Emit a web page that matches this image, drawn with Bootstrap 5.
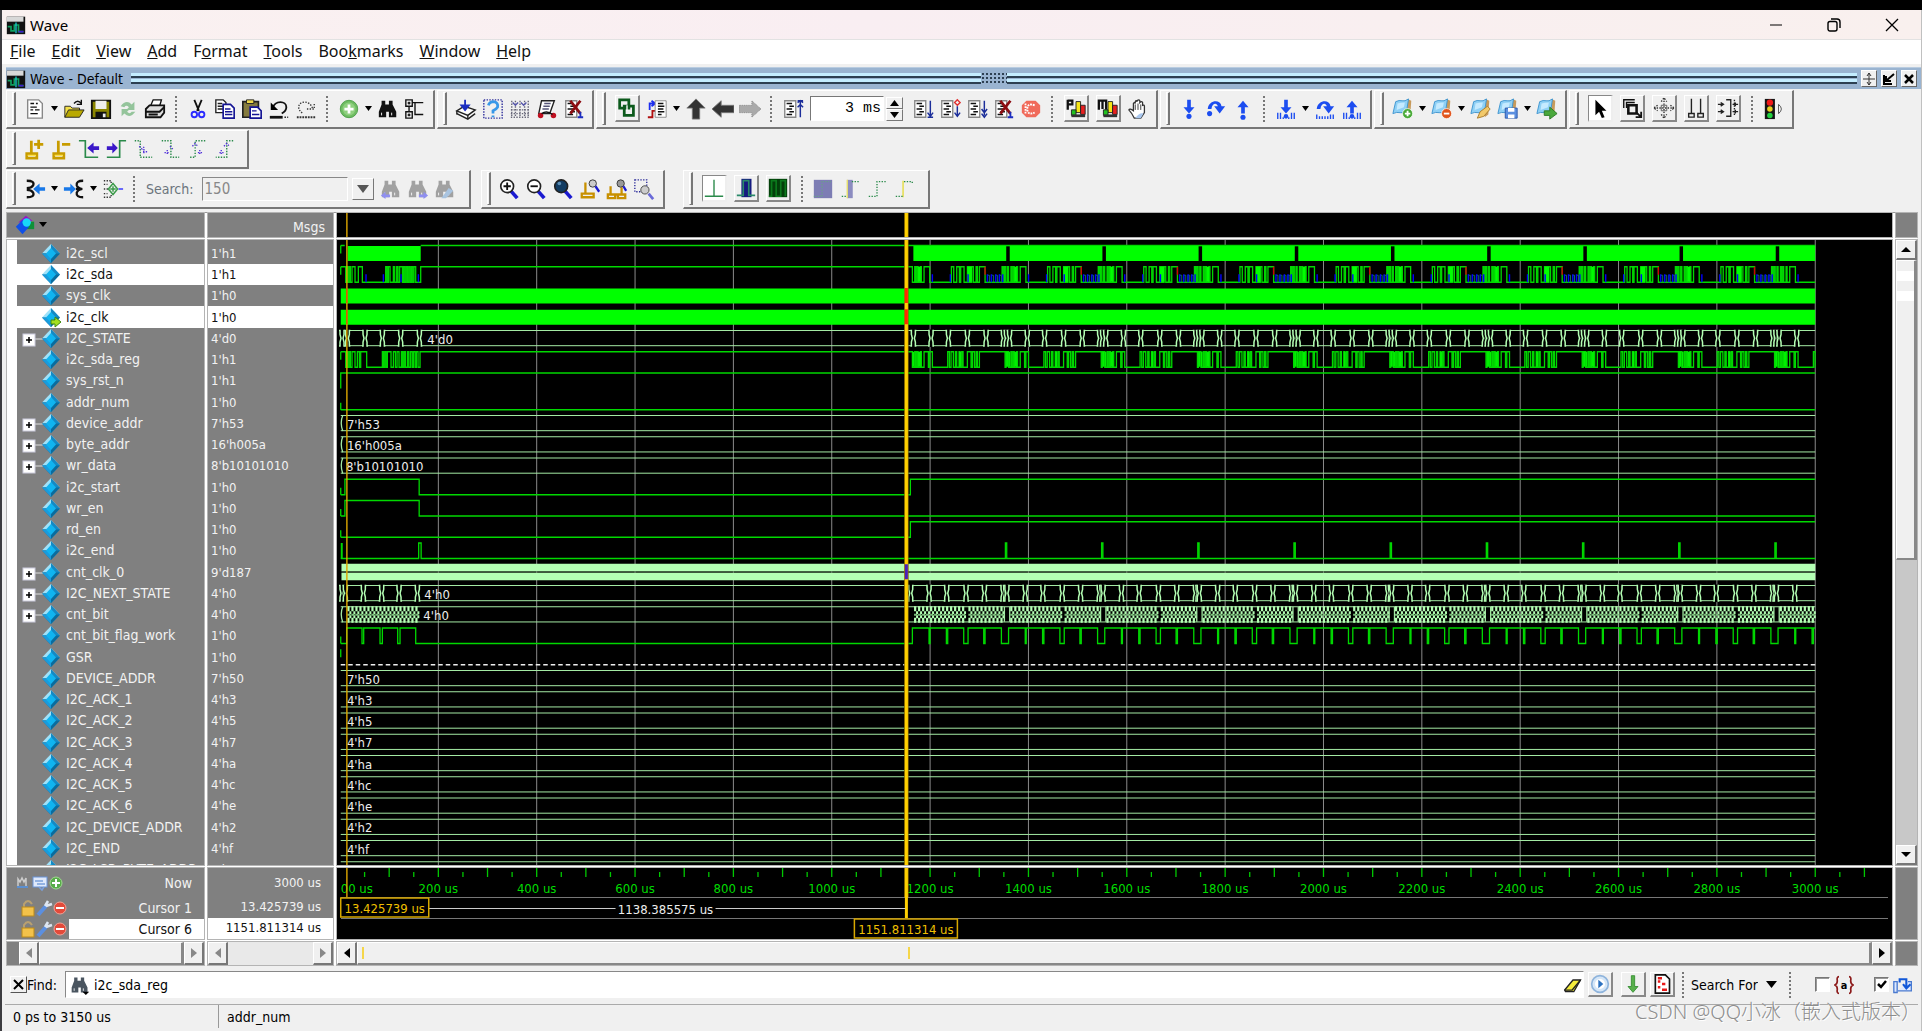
<!DOCTYPE html>
<html lang="en">
<head>
<meta charset="utf-8">
<meta name="viewport" content="width=device-width, initial-scale=1">
<title>Wave</title>
<link href="https://cdn.jsdelivr.net/npm/bootstrap@5.3.0/dist/css/bootstrap.min.css" rel="stylesheet">
<style>
:root{--ui:"DejaVu Sans Condensed","Noto Sans",sans-serif;--menu:"Noto Sans","Open Sans",sans-serif;--face:#f0f0f0;--slot:#808080}
body{font:14px/20px var(--ui);color:#000;background:#000}
.app-window{background:var(--face);border-left:2px solid #3c3c40;border-right:1px solid #c0c0c0;margin-top:10px;min-height:0}
.title-bar{height:30px;background:linear-gradient(90deg,#faf1f0,#f9eef2 45%,#f9f0ee);font:15px/20px var(--menu);border-bottom:1px solid #e2e2e2}
.title-bar button{width:58px;height:26px}
.plain{border:0;background:none;padding:0;display:inline-flex;align-items:center;justify-content:center}
.menu-bar{height:24px;font:16px/20px var(--menu);gap:16px;padding-bottom:2px}
.menu-bar a{color:#111;text-decoration:none}
.pane-bar{height:22px;background:#9ab4d1;border-top:1px solid #b9cce0;margin:3px 0 1px 4px}
.pane-lines{height:11px;background:linear-gradient(#c4edff 0 3px,#2d4052 3px 5px,#9ab4d1 5px 6px,#c4edff 6px 9px,#2d4052 9px 11px)}
.pane-dots{width:26px;height:13px;background:radial-gradient(circle,#2d4052 1px,transparent 1px) 0 0/4px 4px #9ab4d1}
.pane-bar .plain{width:16px;height:17px;background:var(--face);border:1px solid;border-color:#fff #666 #666 #fff}
.tools-row{height:40px;gap:2px}
.tool-strip{height:39px;border:1px solid;border-color:#fff #777 #777 #fff;border-right-width:2px;border-bottom-width:2px;padding:0 5px 1px 5px}
.tool-strip::before{content:"";width:4px;height:33px;margin-right:5px;border:1px solid;border-color:#fff #777 #777 #fff;border-right-width:2px}
.tool-strip.wide{padding-right:10px}
.tb{width:27px;height:27px;flex:none}
.tb svg{width:22px;height:24px}
.tb.boxed{width:25px;margin:0 3px 0 4px;border:1px solid;border-color:#fff #888 #888 #fff;border-right-width:2px;border-bottom-width:2px}
.tb.pressed{background:#fff;border-color:#888 #eee #eee #888}
.tv{width:12px;height:27px}
.tsep{width:0;height:26px;margin:0 7px;border-left:2px dotted #777}
.run-len{width:74px;height:25px;border:1px solid;border-color:#777 #fff #fff #777;border-radius:0;background:#fff;font:15px "Liberation Mono",monospace;text-align:right;padding:0 2px}
.spin{width:17px;margin:0 6px 0 2px}
.spin .plain{height:12px;background:var(--face);border:1px solid;border-color:#fff #777 #777 #fff}
.hist{width:146px;height:24px;border:1px solid;border-color:#888 #fff #fff #888;background:var(--face);color:#888;font:15px var(--ui);padding:0 2px;appearance:none;opacity:1}
.drop{width:22px;height:22px;border:1px solid;border-color:#fff #777 #777 #fff;background:var(--face)}
.panes{display:grid;grid-template-columns:197px 125px minmax(0,1fr) 21px;grid-template-rows:24px minmax(0,1fr) 71px 23px;column-gap:4px;row-gap:3px;background:#fff;margin:2px 4px 0 5px;border-top:1px solid #999;min-height:0}
.panes>*{min-width:0;min-height:0;overflow:hidden;box-shadow:0 0 0 1px #b4b4b4}
.slot{background:var(--slot);color:#f2f2f2}
.black{background:#000}
.sig-list{padding:3px 0 0;margin:0;list-style:none}
.names{border-left:10px solid #fff}
.sig{height:21px;line-height:19px;display:flex;align-items:center;white-space:nowrap}
.sig:nth-child(4n){height:22px}
.sig.sel{background:#fff;color:#111}
.names .sig svg{width:44px;height:21px;margin-right:5px;flex:none}
.values .sig{padding-left:3px}
.values,.readout{font-size:13px}
.cur-row{height:21px;padding-right:12px}
.now-row{height:29px}
.cur-row.sel{color:#111}
.cur-row.sel>span:last-child,.cur-row.sel.full{background:#fff;color:#111}
.cur-row svg{width:50px;height:20px}
.sb{background:var(--face);border:1px solid;border-color:#fff #777 #777 #fff;border-right-width:2px;border-bottom-width:2px;flex:none;width:20px}
.sb.vert{width:100%;height:20px}
.trough{background:#e9e9e9}
.vt{background:#c8c8c8}
.thumb{background:var(--face);border:1px solid;border-color:#fff #888 #888 #fff;border-right-width:3px;border-bottom-width:2px}
.thumb-v{height:300px;background:linear-gradient(var(--face) 0 10px,#fff 10px 20px,var(--face) 20px 30px,#fff 30px 40px,var(--face) 40px)}
.mark-y{border-left:2px solid #f5d64a}
.mark-gap{width:36%}
.find-bar{height:39px}
.find-bar .xbtn{width:17px;height:17px;border:1px solid;border-color:#fff #555 #555 #fff;background:var(--face)}
.find-field{height:27px;background:#fff;border:1px solid;border-color:#888 #fff #fff #888}
.find-field input{border:0;outline:0;font:14px var(--ui);background:none;padding:0}
.find-bar .sq{width:25px;height:25px;border:1px solid;border-color:#fff #888 #888 #fff;border-right-width:2px;border-bottom-width:2px}
.find-bar select{border:0;background:none;appearance:none;font:14px var(--ui)}
.tick{appearance:none;width:15px;height:15px;background:#fff;border:1px solid;border-color:#777 #fff #fff #777;margin:0;box-shadow:inset 1px 1px #999}
.tick:checked{background:#fff url("data:image/svg+xml,%3Csvg xmlns='http://www.w3.org/2000/svg' viewBox='0 0 13 13'%3E%3Cpath d='M3 6l3 3 5-6' fill='none' stroke='%23000' stroke-width='2.5'/%3E%3C/svg%3E") center/13px no-repeat}
.status-bar{height:24px;border-top:1px solid #aaa;margin:0 3px 3px 3px}
.status-bar>div{height:23px;line-height:24px;padding-left:8px}
.status-bar>div+div{border-left:1px solid #999}
.status-first{width:213px}
.watermark{position:absolute;right:0;bottom:6px;font:20px/26px "Noto Sans","Noto Sans CJK SC",sans-serif;font-weight:300;color:#8d8d8d;text-shadow:1px 1px #fff;white-space:nowrap}
svg text{font-family:var(--ui);font-size:13px}
</style>
<script src="https://cdn.jsdelivr.net/npm/bootstrap@5.3.0/dist/js/bootstrap.bundle.min.js"></script>
</head>
<body class="vh-100 d-flex flex-column overflow-hidden">
<main class="app-window flex-grow-1 d-flex flex-column position-relative">
  <header class="title-bar d-flex align-items-center flex-shrink-0">
    <span class="mx-1" data-ic="app"></span><span class="me-auto">Wave</span>
    <button class="plain" aria-label="Minimize"><svg width="14" height="14"><path d="M1 7h12" stroke="#000"/></svg></button>
    <button class="plain" aria-label="Restore"><svg width="14" height="14" fill="none" stroke="#000" stroke-width="1.4"><rect x="1" y="3.500" width="9" height="9.500" rx="2"/><path d="M4 1h6q3 0 3 3v6"/></svg></button>
    <button class="plain" aria-label="Close"><svg width="14" height="14"><path d="M1 1l12 12M13 1L1 13" stroke="#000" stroke-width="1.3"/></svg></button>
  </header>
  <nav class="menu-bar bg-white d-flex align-items-center ps-2 flex-shrink-0">
    <a href="#"><u>F</u>ile</a><a href="#"><u>E</u>dit</a><a href="#"><u>V</u>iew</a><a href="#"><u>A</u>dd</a><a href="#">F<u>o</u>rmat</a><a href="#"><u>T</u>ools</a><a href="#">Boo<u>k</u>marks</a><a href="#"><u>W</u>indow</a><a href="#"><u>H</u>elp</a>
  </nav>
  <div class="pane-bar d-flex align-items-center flex-shrink-0">
    <span data-ic="app"></span><span class="px-1 me-1 text-nowrap">Wave - Default</span>
    <div class="pane-lines flex-fill"></div><div class="pane-dots"></div><div class="pane-lines flex-fill me-1"></div>
    <button class="plain me-1" aria-label="Float"><svg width="12" height="12"><path d="M6 0v12M0 6h12M4 3l2-3 2 3M4 9l2 3 2-3" stroke="#333" fill="none"/></svg></button>
    <button class="plain me-1" aria-label="Dock"><svg width="12" height="12"><path d="M11 1L4 7M3 3v5h5M1 2v9h8" stroke="#000" stroke-width="2" fill="none"/></svg></button>
    <button class="plain me-1" aria-label="Close pane"><svg width="12" height="12"><path d="M2 2l8 8M10 2L2 10" stroke="#000" stroke-width="2.500"/></svg></button>
  </div>
  <div class="tools-row d-flex ms-1 flex-shrink-0">
    <div class="tool-strip d-flex align-items-center" data-tools="new v open save reload print | cut copy paste undo redo | add v find tree"></div>
    <div class="tool-strip d-flex align-items-center" data-tools="stack helpq gridq glasses docx"></div>
    <div class="tool-strip d-flex align-items-center"><div class="d-flex align-items-center" data-tools="+link restart v up left right | doctop"></div>
      <input class="run-len ms-1" aria-label="Run length" value="3 ms">
      <div class="spin d-flex flex-column"><button class="plain" aria-label="More"><svg width="9" height="6"><path d="M0 6l4.500-6L9 6z"/></svg></button><button class="plain" aria-label="Less"><svg width="9" height="6"><path d="M0 0h9L4.500 6z"/></svg></button></div>
      <div class="d-flex align-items-center" data-tools="docdn docdia docall docx brk | +perf +mem hand"></div></div>
    <div class="tool-strip d-flex align-items-center" data-tools="bdown bover bup | sdown v sover sup"></div>
    <div class="tool-strip d-flex align-items-center" data-tools="fadd v fdel v fedit fsave v fgo"></div>
    <div class="tool-strip d-flex align-items-center" data-tools="*pointer +zoomsel +move +two +edit | light"></div>
  </div>
  <div class="tools-row d-flex ms-1 flex-shrink-0"><div class="tool-strip wide d-flex align-items-center" data-tools="curadd curdel eprev enext dfall dfall2 drise drise2"></div></div>
  <div class="tools-row d-flex ms-1 flex-shrink-0">
    <div class="tool-strip wide d-flex align-items-center me-1"><div class="d-flex align-items-center" data-tools="bin v bout v bx |"></div>
      <label for="hist" class="text-secondary ms-1 me-2">Search:</label><select id="hist" class="hist me-1" disabled><option>150</option></select>
      <button class="plain drop" aria-label="Search history"><svg width="12" height="8"><path d="M0 0h12L6 8z" fill="#555"/></svg></button>
      <div class="d-flex align-items-center ms-1" data-tools="fprev fnext fopt"></div></div>
    <div class="tool-strip d-flex align-items-center me-3 ms-1" data-tools="zin zout zfull zcur ztwo zarea"></div>
    <div class="tool-strip wide d-flex align-items-center" data-tools="*w1 +w2 +w3 | w4 w5 w6 w7"></div>
  </div>
  <section class="panes flex-grow-1">
    <div class="slot d-flex align-items-center ps-2"><span data-ic="colors"></span><svg width="9" height="6" class="ms-1"><path d="M0 0h8L4 5z"/></svg></div>
    <div class="slot text-end pe-2 pt-1">Msgs</div>
    <div class="black"><svg id="headPlot" class="d-block w-100 h-100"></svg></div>
    <div class="slot"></div>

    <ul id="names" class="slot sig-list names"></ul>
    <ul id="values" class="slot sig-list values"></ul>
    <div class="black"><svg id="wavePlot" class="d-block w-100 h-100"></svg></div>
    <div class="vt d-flex flex-column"><button class="plain sb vert" aria-label="Scroll up"><svg width="10" height="6"><path d="M0 5l5-5 5 5z"/></svg></button><div class="thumb thumb-v"></div><button class="plain sb vert mt-auto" aria-label="Scroll down"><svg width="10" height="6"><path d="M0 0h10L5 5z"/></svg></button></div>

    <div class="slot">
      <div class="cur-row now-row d-flex align-items-center ps-2"><span class="me-auto" data-ic="nowset"></span><span>Now</span></div>
      <div class="cur-row d-flex align-items-center ps-2"><span class="me-auto ps-1" data-ic="curset"></span><span>Cursor 1</span></div>
      <div class="cur-row sel d-flex align-items-center ps-2 pe-0"><span class="ps-1" data-ic="curset"></span><span class="flex-grow-1 text-end pe-2">Cursor 6&nbsp;</span></div>
    </div>
    <div class="slot text-end readout">
      <div class="cur-row now-row d-flex align-items-center justify-content-end">3000 us</div>
      <div class="cur-row">13.425739 us</div>
      <div class="cur-row sel full">1151.811314 us</div>
    </div>
    <div class="black"><svg id="axisPlot" class="d-block w-100 h-100"></svg></div>
    <div class="slot"></div>

    <div class="slot d-flex ps-2"><button class="plain sb ms-1" aria-label="Names left"><svg width="6" height="10"><path d="M6 0v10L0 5z" fill="#888"/></svg></button><div class="thumb flex-fill"></div><button class="plain sb" aria-label="Names right"><svg width="6" height="10"><path d="M0 0v10l6-5z" fill="#888"/></svg></button></div>
    <div class="trough d-flex"><button class="plain sb" aria-label="Values left"><svg width="6" height="10"><path d="M6 0v10L0 5z" fill="#888"/></svg></button><div class="flex-fill"></div><button class="plain sb" aria-label="Values right"><svg width="6" height="10"><path d="M0 0v10l6-5z" fill="#888"/></svg></button></div>
    <div class="trough d-flex"><button class="plain sb" aria-label="Wave left"><svg width="6" height="10"><path d="M6 0v10L0 5z"/></svg></button><div class="thumb flex-fill d-flex py-1"><i class="mark-y ms-1"></i><i class="mark-gap"></i><i class="mark-y"></i></div><button class="plain sb" aria-label="Wave right"><svg width="6" height="10"><path d="M0 0v10l6-5z"/></svg></button></div>
    <div class="slot"></div>
  </section>
  <form class="find-bar d-flex align-items-center ps-2 flex-shrink-0">
    <button type="button" class="plain xbtn" aria-label="Close find"><svg width="11" height="11"><path d="M1 1l9 9M10 1L1 10" stroke="#000" stroke-width="2"/></svg></button>
    <label for="find" class="me-1">Find:</label>
    <div class="find-field flex-fill d-flex align-items-center ps-1 pe-0 ms-1"><span class="me-1" data-ic="findv"></span><input id="find" class="flex-fill" value="i2c_sda_reg"><span data-ic="eraser"></span></div>
    <button type="button" class="plain sq ms-1" aria-label="Go"><span data-ic="play"></span></button>
    <button type="button" class="plain sq ms-2" aria-label="Next"><span data-ic="garrow"></span></button>
    <button type="button" class="plain sq ms-1" aria-label="Report"><span data-ic="rdoc"></span></button>
    <i class="tsep"></i>
    <select aria-label="Search For"><option>Search For</option></select><svg width="11" height="7" class="ms-2 me-1"><path d="M0 0h11L5.500 7z"/></svg>
    <i class="tsep ms-2 me-4"></i>
    <input type="checkbox" class="tick" id="exact"><label for="exact" class="mx-1" data-ic="brace"></label>
    <input type="checkbox" class="tick ms-3" id="wrap" checked><label for="wrap" class="ms-1 me-2" data-ic="wrapi"></label>
  </form>
  <footer class="status-bar d-flex flex-shrink-0"><div class="status-first">0 ps to 3150 us</div><div class="flex-fill">addr_num</div></footer>
  <div class="watermark">CSDN @QQ小冰（嵌入式版本）</div>
</main>
<script>
const s = (c, w = 1.5) => `fill="none" stroke="${c}" stroke-width="${w}"`;
const doc = `<path d="M3 3h12v18H3z" fill="#fff" stroke="#888" stroke-width="1.500"/><path d="M5 6h6M8 9h5M5 12h6M8 15h5M5 18h6" ${s('#111')}/>`;
const bino = c => `<path d="M5 3h4v4h4V3h4v4l4 8v6h-8v-6h-3v6H2v-6L5 7z" fill="${c}"/><path d="M5 16v3M16 16v3" ${s('#fff',1)}/>`;
const lens = f => `<path d="M14 14l7 8" ${s('#1a1ad0',4)}/><circle cx="10" cy="9" r="7" fill="${f}" stroke="#222" stroke-width="1.800"/>`;
const flag = e => `<path d="M17 1l4 2-1 15-4 3z" fill="#c79a5b"/><path d="M4 4q4-2 7-1 3 1 7-2l-2 13q-4 3-7 2-4-1-8 1z" fill="#8fd0f5" stroke="#3a93cf"/><path d="M6 6q4-1 8-1l-1 5-8 3z" fill="#c5eaff"/>${e}`;
const cdn = 'M12 17L6 10h4V2h4v8h4z', cup = 'M12 3L6 10h4v7h4v-7h4z';
const arc = '<path d="M3 12C4 2 17 1 18 9h4l-6 8-6-8h4c-1-4-6-4-7 3z" fill="#1c4df0"/>';
const bars = `<path d="M3 16v7M6 16v7M18 16v7M21 16v7M9 21v2M15 21v2" ${s('#1c4df0')}/>`;
const red = `<path d="M8 3l11 14M19 3L8 17" ${s('#8c0d12',3)}/>`;
const rnd = (f, d) => `<circle cx="17" cy="17" r="5.500" fill="${f}" stroke="#fff" stroke-width=".8"/><path d="${d}" ${s('#fff',2)}/>`;
const dots = c => `fill="none" stroke="${c}" stroke-width="1.500" stroke-dasharray="1.500 1.500"`;
const IC = {
app:`<rect x="1" y="2" width="22" height="21" fill="#111"/><rect x="1" y="2" width="20" height="6" fill="#d8d8d8"/><path d="M2 14h4v5h4v-7h5v8h6" ${s('#0ea060',2)}/><path d="M12 9v13" ${s('#18d0d8',1.5)}/><path d="M15 20h6" ${s('#4018d0',2)}/>`,
new:`<path d="M4 2h12l4 4v16H4z" fill="#fff" stroke="#888" stroke-width="1.500"/><path d="M7 6h4M13 6h2M7 10h7M7 13h3M12 13h5M7 17h8" ${s('#111')}/>`,
open:`<path d="M2 21V9h6l2 2h8v3" fill="#f4e04a" stroke="#222"/><path d="M2 21l4-8h17l-5 8z" fill="#b9a900" stroke="#222"/><path d="M12 6q4-5 8 0M20 2v5h-5" ${s('#111')}/>`,
save:`<path d="M2 3h20v19H2z" fill="#8a8500" stroke="#111" stroke-width="2"/><path d="M6 3h12v9H6z" fill="#eee"/><path d="M6 15h12v7H6z" fill="#111"/><path d="M14 17h3v4h-3z" fill="#eee"/>`,
reload:`<g opacity=".5"><path d="M4 9q6-8 12-2l3-3v9h-9l3-3q-3-3-5 0z" fill="#3a9a48"/><path d="M20 15q-6 8-12 2l-3 3v-8h9l-3 3q3 3 5 0z" fill="#3a9a48"/></g>`,
print:`<path d="M7 9l3-7h9l-2 7" fill="#fff" stroke="#111" stroke-width="1.500"/><path d="M2 12l4-4h16v8l-4 5H2z" fill="#ddd" stroke="#111" stroke-width="2"/><path d="M2 15h15l5-5M5 18h10" ${s('#111',2)}/>`,
cut:`<path d="M8 2l5 12M16 2l-5 12" ${s('#111',2)}/><circle cx="8" cy="18" r="3" ${s('#2b2bff',2)}/><circle cx="16" cy="18" r="3" ${s('#2b2bff',2)}/>`,
copy:`<path d="M2 2h8l3 3v11H2z" fill="#fff" stroke="#222" stroke-width="1.500"/><path d="M4 6h5M4 9h6M4 12h6" ${s('#222')}/><path d="M10 7h8l4 4v11H10z" fill="#fff" stroke="#151595" stroke-width="1.800"/><path d="M12 12h6M12 15h8M12 18h8" ${s('#151595')}/>`,
paste:`<path d="M2 4h17v17H2z" fill="#857b3e" stroke="#222" stroke-width="1.800"/><path d="M6 2h8v4H6z" fill="#eed84a" stroke="#222"/><path d="M10 10h8l4 4v8H10z" fill="#fff" stroke="#151595" stroke-width="1.800"/><path d="M12 14h5M12 18h8" ${s('#151595')}/>`,
undo:`<path d="M5 11C8 2 20 3 20 10q0 4-5 7" ${s('#111',2)}/><path d="M3 5v8h8z"/><path d="M2 21h14" ${s('#111',3)}/><path d="M18 21h4" ${dots('#111')}/>`,
redo:`<path d="M19 11C16 2 4 3 4 10q0 4 5 7" ${dots('#333')}/><path d="M13 12h8V5" ${dots('#333')}/><path d="M2 21h20" stroke-dasharray="2 1" ${s('#333',2)}/>`,
add:`<circle cx="12" cy="12" r="9.500" fill="#6fbd62" stroke="#4c9d47"/><circle cx="12" cy="12" r="7" fill="#8fd07f"/><path d="M12 7v10M7 12h10" ${s('#fff',3)}/>`,
find:bino('#111'), tree:`<path d="M2 2h7v7H2zM2 15h7v7H2zM5.500 9v6M9 5h12M12 5v13h9M4 5.500h3M4 18.500h3M5.500 4v3M5.500 17v3" ${s('#111')}/>`,
stack:`<path d="M2 14l8-5 12 4-8 6zM2 17l12 6 8-6" fill="#fff" stroke="#222" stroke-width="1.600"/><path d="M2 14v4M14 19v4" ${s('#222')}/><path d="M11 2v8M7 8l4 5 4-5z" fill="#1c2ec0" stroke="#1c2ec0" stroke-width="2"/>`,
helpq:`<rect x="2" y="2" width="20" height="20" ${dots('#2b2b9a')}/><path d="M7 8q1-4 6-4 5 1 4 6-1 2-5 4v3M12 19v2" ${s('#3898e8',3)}/>`,
gridq:`<path d="M3 3v18M7 3v18M12 3v18M17 3v18M21 3v18" ${dots('#667')}/><path d="M4 5l3 3 3-3M13 5l3 3 3-3" ${s('#55a')}/><path d="M2 13h20M2 17h20M2 21h20" ${dots('#667')}/>`,
glasses:`<path d="M6 3h14l-5 14H3z" fill="#fff" stroke="#222" stroke-width="1.500"/><path d="M9 6h7M8 9h7M7 12h7" ${s('#557')}/><circle cx="5" cy="19" r="3" fill="#c01020"/><circle cx="19" cy="19" r="3" fill="#c01020"/><path d="M6 17q6-4 12 1" ${s('#111')}/>`,
docx:doc+red+`<path d="M19 15v6M16 21h6" ${s('#1c2ec0',2)}/>`,
link:`<path d="M4 3h10v9H4zM9 10h10v10H9z" ${s('#0c5a1c',3)}/><path d="M12 9v6" ${s('#fff')}/>`,
restart:`<path d="M2 21h5v-7h4" ${s('#b01010',2)}/><path d="M4 13V6h5M6 3l4 3-4 3" ${s('#1c2ef0',2)}/><path d="M10 3h12v18H10z" fill="#fff" stroke="#888"/><path d="M13 6h6M13 9h7M13 12h6M13 15h7M13 18h4" ${s('#111')}/>`,
up:`<path d="M12 1l10 10h-6v12H8V11H2z" fill="#333" stroke="#777"/>`, left:`<path d="M0 12l10-9v5h14v8H10v5z" fill="#333" stroke="#777"/>`,
right:`<path d="M24 12l-10-9v5H0v8h14v5z" fill="#aaa" stroke="#888" stroke-dasharray="1 1"/>`,
doctop:doc+`<path d="M17 3h6M17 5l3-2 3 2M17 10l3-3 3 3M20 4v17" ${s('#1c2e9a',1.6)}/>`,
docdn:doc+`<path d="M20 3v17M17 21h6M17 16l3 4 3-4" ${s('#1c2e9a',1.6)}/>`,
docdia:doc+`<path d="M20 9v10M17 16l3 4 3-4" ${s('#1c2e9a',1.6)}/><path d="M20 2l3 3-3 3-3-3z" ${s('#e03030')}/>`,
docall:doc+`<path d="M20 3v16M17 12l3 4 3-4M17 17l3 4 3-4" ${s('#1c2e9a',1.6)}/>`,
brk:`<path d="M7 3h10l5 5v8l-5 5H7l-5-5V8z" fill="#f06a5a"/><path d="M16 8q-8-3-8 4t8 4M6 6v12" stroke-dasharray="2 1" ${s('#fff',2)}/>`,
perf:`<path d="M3 3v11M3 4h5v4H3" ${s('#111',2.5)}/><path d="M12 5h5v12h-5z" fill="#f6e617" stroke="#222"/><path d="M17 9h5v10h-5z" fill="#e82020" stroke="#222"/><path d="M7 14h5v6H7z" fill="#20c020" stroke="#222"/><path d="M7 19h15v3H7z" fill="#333"/>`,
mem:`<path d="M2 14V4h4v9M6 4h4v10" ${s('#111',2.5)}/><path d="M12 5h5v12h-5z" fill="#f6e617" stroke="#222"/><path d="M17 9h5v10h-5z" fill="#e82020" stroke="#222"/><path d="M7 14h5v6H7z" fill="#20c020" stroke="#222"/><path d="M7 19h15v3H7z" fill="#333"/>`,
hand:`<path d="M8 22q-3-6-6-9 1-2 5 1V6q1-2 2 0V4q1-2 2 0V3q2-2 3 0v2q2-2 3 0v3q2-1 2 1v7l-4 6z" fill="#fff" stroke="#333" stroke-width="1.400"/><path d="M9 7v6M12 6v7M15 7v6" ${s('#333',1)}/><path d="M9 22q5-7 9-5l-3 5z" fill="#a9c7ee"/>`,
bdown:`<path d="${cdn}" fill="#1c4df0"/><circle cx="12" cy="20" r="2.800" fill="#1c4df0"/>`, bover:arc+`<circle cx="5" cy="17" r="2.800" fill="#1c4df0"/>`,
bup:`<path d="${cup}" fill="#1c4df0"/><circle cx="12" cy="21" r="2.800" fill="#1c4df0"/>`,
sdown:`<path d="${cdn}" fill="#1c4df0"/><circle cx="12" cy="20" r="2.500" fill="#1c4df0"/>`+bars, sover:arc+`<path d="M3 18v5M6 20v3M9 20v3M12 20v3M15 20v3M18 18v5M21 18v5" ${s('#1c4df0')}/>`,
sup:`<path d="${cup}" fill="#1c4df0"/><circle cx="12" cy="20" r="2.500" fill="#1c4df0"/>`+bars,
fadd:flag(rnd('#46a834','M17 14v6M14 17h6')), fdel:flag(rnd('#e0541c','M14 17h6')),
fedit:flag(`<path d="M8 22l3-7 8-6 3 3-7 8z" fill="#f2c96a" stroke="#a87b2a"/>`), fsave:flag(`<path d="M9 11h13v11H9z" fill="#5b8fe0" stroke="#2a55a8"/><path d="M12 11h7v4h-7zM12 18h7v4h-7z" fill="#fff"/>`),
fgo:flag(`<path d="M9 14h6v-4l8 7-8 6v-4H9z" fill="#4aa83c" stroke="#2c7a24"/>`),
pointer:`<path d="M7 3v17l4-4 3 7 3-1-3-7h5z"/>`, zoomsel:`<path d="M3 12V3h12M6 12V6h9" ${s('#111')}/><path d="M8 9h9v9H8z" ${s('#111',2.8)}/><path d="M17 17l5 5M22 16v6h-6" ${s('#111',2)}/>`,
move:`<path d="M12 1v22M1 12h22M9 5l3-4 3 4M9 19l3 4 3-4M5 9l-4 3 4 3M19 9l4 3-4 3" ${dots('#333')}/><path d="M9 9h6v6H9z" ${s('#555',1)}/>`,
two:`<path d="M7 2v16M17 2v16M4 18h6v4H4zM14 18h6v4h-6z" ${s('#222')}/>`, edit:`<path d="M1 8h6M1 16h6M4 6l3 2-3 2M4 14l3 2-3 2M10 3h5v18h-5M17 8h6M17 16h6M20 6v4M20 14v4" ${s('#222')}/><path d="M19 3v18" ${dots('#222')}/>`,
light:`<rect x="2" y="1" width="11" height="22" fill="#151515"/><circle cx="7.500" cy="5" r="3.500" fill="#f01818"/><circle cx="7.500" cy="12" r="3" fill="#e8d020"/><circle cx="7.500" cy="19" r="3" fill="#20d040"/><path d="M17 7q6 5 0 10z" fill="#fff" stroke="#444"/>`,
curadd:`<path d="M8 3v14M3 17h11v5H3zM11 7h10M16 2v10" ${s('#c89c00',3)}/><path d="M4 19h9" ${s('#ffe34a',1.5)}/>`, curdel:`<path d="M8 3v14M3 17h11v5H3zM12 7h9" ${s('#c89c00',3)}/><path d="M4 19h9" ${s('#ffe34a',1.5)}/>`,
eprev:`<path d="M1 3h7v18h14" ${s('#2a8a4a',1.8)}/><path d="M10 11l7-6v4h6v4h-6v4z" fill="#3a18c8"/>`, enext:`<path d="M23 3h-7v18H2" ${s('#2a8a4a',1.8)}/><path d="M14 11L8 5v4H2v4h6v4z" fill="#3a18c8"/>`,
dfall:`<path d="M3 3h6v18h13" ${dots('#2a8a4a')}/><path d="M8 9l3 3 3-3M12 15h5M13 12v6" ${dots('#5030d8')}/>`, dfall2:`<path d="M3 3h10v18h9" ${dots('#2a8a4a')}/><path d="M12 9l3 3M6 16h5M9 13v6" ${dots('#5030d8')}/>`,
drise:`<path d="M21 3H10v18H3" ${dots('#2a8a4a')}/><path d="M7 9l3-3 3 3M13 16h5M15 13v6" ${dots('#5030d8')}/>`, drise2:`<path d="M22 3h-7v18H3" ${dots('#2a8a4a')}/><path d="M12 9l3-3 3 3M7 16h5M9 13v6" ${dots('#5030d8')}/>`,
bin:`<path d="M3 3q9 0 7 5-2 3-7 3M3 21q9 0 7-5-2-3-7-3" ${s('#111',2.5)}/><path d="M10 12l7-6v4h6v4h-6v4z" fill="#1878e8"/>`, bout:`<path d="M22 3q-8 0-7 5 1 3 6 4-5 1-6 4-1 5 7 5M14 12h7" ${s('#111',2.5)}/><path d="M14 12L8 6v4H1v4h7v4z" fill="#1878e8"/>`,
bx:`<path d="M2 3h8v4M2 21h8v-4M2 7h4M2 17h4M2 12h5" ${dots('#333')}/><path d="M12 6l5 6-5 6-5-6zM9 12h6M12 9v6" ${s('#3a9a48',1.6)}/><path d="M18 12h5" ${s('#2b2bff')}/>`,
fprev:`<g opacity=".5">${bino('#555')}</g><path d="M1 19l5-4v3h5v3H6v2z" fill="#8f8ff0"/>`, fnext:`<g opacity=".5">${bino('#555')}</g><path d="M23 19l-5-4v3h-5v3h5v2z" fill="#8f8ff0"/>`, fopt:`<g opacity=".5">${bino('#555')}</g><path d="M8 22l8-11 5 3-8 8z" fill="#a9c4e0"/>`,
zin:lens('#fff')+`<path d="M10 5v8M6 9h8" ${s('#111',2)}/>`, zout:lens('#fff')+`<path d="M6 9h8" ${s('#111',2)}/>`, zfull:lens('#123c62')+`<circle cx="8" cy="6" r="2" fill="#5c8fb8"/>`,
zcur:`<path d="M7 5v13M3 17h13v4H3z" ${s('#c89000',2.5)}/><circle cx="15" cy="6" r="4" fill="#ccc" stroke="#333"/><path d="M18 9l4 6" ${s('#1a1ad0',2.5)}/>`,
ztwo:`<path d="M5 9v9M2 18h8v4H2zM17 10v8M13 18h8v4h-8zM5 18h12" ${s('#c89000',2.5)}/><circle cx="16" cy="6" r="4" fill="#999" stroke="#333"/><path d="M19 9l3 5" ${s('#1a1ad0',2.5)}/>`,
zarea:`<path d="M2 2h13v13H2z" ${dots('#2b2b9a')}/><circle cx="13" cy="13" r="4.500" fill="#ccc" stroke="#444"/><path d="M17 17l5 6" ${s('#6a6ad8',3)}/>`,
w1:`<path d="M12 3v18M2 21h20" ${s('#2a8a4a',1.5)}/>`, w2:`<rect x="7" y="2" width="11" height="20" fill="#151a80"/><path d="M2 20h7V4h6v16h7" ${s('#2a8a6a',1.8)}/>`,
w3:`<rect x="2" y="2" width="20" height="20" fill="#03400a"/><path d="M2 21h3V4h5v17h5V4h5v17" ${s('#0b7a1c',1.8)}/>`,
w4:`<rect x="2" y="2" width="20" height="20" fill="#7d7db4"/><path d="M2 20h9V4h10" ${dots('#6aa08a')}/>`,
w5:`<rect x="9" y="2" width="6" height="20" fill="#8c8cc0"/><path d="M9 2v20" ${s('#e8e06a')}/><path d="M3 20h6M14 4h8" ${dots('#2a8a4a')}/>`,
w6:`<path d="M3 20h9V4h10" ${dots('#2a8a4a')}/>`, w7:`<path d="M11 3v18" ${s('#e8e06a',2)}/><path d="M3 20h8M12 4h9v2" ${dots('#2a8a4a')}/>`,
colors:`<path d="M4 9l9-8 8 6z" fill="#9a10c8"/><path d="M13 8h10v9H13z" fill="#109038"/><path d="M1 14l8-8 8 8-8 9z" fill="#0f50e8"/><circle cx="14" cy="9" r="5" fill="#18d8f8"/>`,
findv:bino('#4a5560')+`<path d="M15 20h8l-4 4z"/>`,
eraser:`<path d="M2 18L12 6h9l-8 14H3z" fill="#f4ec3a" stroke="#222" stroke-width="1.600"/><path d="M2 18h9L21 6" ${s('#222')}/>`,
play:`<circle cx="12" cy="12" r="10" fill="#d5e6f7" stroke="#8fb4dc" stroke-width="2"/><circle cx="12" cy="12" r="6" fill="#fff"/><path d="M10 7l6 5-6 5z" fill="#2d72c0"/>`,
garrow:`<path d="M10 2h4v13h4l-6 7-6-7h4z" fill="#58b04c" stroke="#2f8a2c"/>`,
rdoc:`<path d="M4 1h12l5 5v17H4z" fill="#fff" stroke="#111" stroke-width="2"/><path d="M7 5h5M7 9h3M12 12h4M7 16h3M12 19h6" ${s('#e81818',3)}/>`,
brace:`<path d="M6 2q-3 0-2 5 0 4-3 5 3 1 3 5-1 5 2 5M18 2q3 0 2 5 0 4 3 5-3 1-3 5 1 5-2 5" ${s('#8c1a1a',2)}/><text x="8" y="17" font-weight="bold">a</text>`,
wrapi:`<path d="M1 8v13h4V8zM6 19h16V8h-4" fill="#dfeaff" stroke="#4a7ad0" stroke-width="1.600"/><path d="M8 9V5h8v9M12 11l4 5 5-5" ${s('#1258d8',2.5)}/>`
};
const svg = (n, w = 22, h = 22) => `<svg width="${w}" height="${h}" viewBox="0 0 24 24">${IC[n]}</svg>`;
const smallSet = m => `<circle cx="41" cy="10" r="6" fill="${m ? '#58ad4a' : '#e34a3a'}" stroke="${m ? '#9fd890' : '#f4a094'}"/><path d="M37 10h8${m ? 'M41 6v8' : ''}" ${s('#fff',2)}/>`;
const SETS = {
 nowset:`<svg viewBox="0 0 50 20"><path d="M3 14V6l2 3 2-4 2 4 2-4v9" ${s('#ccc')}/><path d="M2 14h11" ${s('#5b8fd0',2)}/><rect x="18" y="4" width="14" height="10" fill="#dfe9fb" stroke="#6a94d8"/><path d="M20 8h8M22 11h8M24 14l3 3 2-3" ${s('#7aa0dc')}/>${smallSet(1)}</svg>`,
 curset:`<svg viewBox="0 0 50 20"><path d="M5 9V6q4-6 8 0" ${s('#b9a070',2)}/><rect x="3" y="9" width="12" height="9" fill="#f3c24a" stroke="#b98a1c"/><path d="M19 17l8-9" ${s('#5b8fe0',4)}/><path d="M26 8l3-5M27 8l6-2" ${s('#dde6f2',2.5)}/>${smallSet(0)}</svg>`};
document.querySelectorAll('[data-ic]').forEach(e => {
  e.innerHTML = SETS[e.dataset.ic] || svg(e.dataset.ic, 20, 20);
  e.classList.add('d-inline-flex');
});
document.querySelectorAll('[data-tools]').forEach(e => {
  e.innerHTML = e.dataset.tools.split(' ').map(t => {
    if (t === '|') return '<i class="tsep"></i>';
    if (t === 'v') return '<button class="plain tv" aria-label="More options"><svg width="7" height="5"><path d="M0 0h7L3.500 5z"/></svg></button>';
    const k = t[0], n = t.replace(/^[+*]/, '');
    const c = k === '+' ? ' boxed' : k === '*' ? ' boxed pressed' : '';
    return `<button class="plain tb${c}" aria-label="${n}">${svg(n)}</button>`;
  }).join('');
});

/* name, value, expandable, selected, input port */
const SIG = [["i2c_scl","1'h1"],["i2c_sda","1'h1",0,1],["sys_clk","1'h0"],["i2c_clk","1'h0",0,1,1],["I2C_STATE","4'd0",1],["i2c_sda_reg","1'h1"],["sys_rst_n","1'h1"],["addr_num","1'h0"],["device_addr","7'h53",1],["byte_addr","16'h005a",1],["wr_data","8'b10101010",1],["i2c_start","1'h0"],["wr_en","1'h0"],["rd_en","1'h0"],["i2c_end","1'h0"],["cnt_clk_0","9'd187",1],["I2C_NEXT_STATE","4'h0",1],["cnt_bit","4'h0",1],["cnt_bit_flag_work","1'h0"],["GSR","1'h0"],["DEVICE_ADDR","7'h50"],["I2C_ACK_1","4'h3"],["I2C_ACK_2","4'h5"],["I2C_ACK_3","4'h7"],["I2C_ACK_4","4'ha"],["I2C_ACK_5","4'hc"],["I2C_ACK_6","4'he"],["I2C_DEVICE_ADDR","4'h2"],["I2C_END","4'hf"],["I2C_LSB_BYTE_ADDR","4'h6"]];
const gem = (x, p) => `<svg viewBox="0 0 44 21">${x ? `<path d="M17 11h10" stroke="#ddd"/><rect x="6" y="6" width="12" height="12" fill="#fff" stroke="#ccd"/><path d="M9 12h6M12 9v6" ${s('#000',1.5)}/>` : ''}<path d="M34 1l9 9.500H25z" fill="#9fe2fa"/><path d="M34 1l9 9.500-9 9.500z" fill="#1489c4"/><path d="M34 20l9-9.500H25z" fill="#0a6c9e"/><path d="M25 10.500L34 20v-9.500z" fill="#1a9bdc"/><path d="M34 5l5 5.500-5 5.500-5-5.500z" fill="#10b4f0"/>${p ? '<path d="M34 13h4v-3l6 5-6 5v-3h-4z" fill="#a4e020" stroke="#3f8a10"/>' : ''}</svg>`;
names.innerHTML = SIG.map(g => `<li class="sig${g[3] ? ' sel' : ''}">${gem(g[2], g[4])}${g[0]}</li>`).join('');
values.innerHTML = SIG.map(g => `<li class="sig${g[3] ? ' sel' : ''}">${g[1]}</li>`).join('');

const G = '#00d800', B = '#a4eaa4', END = 3000, UNIT = 0.678, PERIOD = 288.5, FIRST = 1098.2, LEAD = -20.3;
function draw() {
  const W = wavePlot.clientWidth, H = wavePlot.clientHeight, k = (W - 6) / 3150, X = t => 3 + t * k;
  const hi = r => 5.500 + 21.25 * r, lo = r => hi(r) + 15.5;
  const R = u => X(FIRST + u * UNIT), L = u => X(LEAD + u * UNIT), XE = X(END), X0 = X(1.5);
  let o = '';
  const P = (d, c = G, w = 1.3) => o += `<path d="${d}" fill="none" stroke="${c}" stroke-width="${w}"/>`;
  const F = (x, y, w, h, c) => o += `<rect x="${x}" y="${y}" width="${w}" height="${h}" fill="${c}"/>`;
  for (let t = 200; t <= 3000; t += 200) P(`M${X(t)} 0V${H}`, '#8a8a8a', 1);
  /* binary trace: level before the first edge, then the x of every edge */
  const bin = (r, lvl, xs, x0 = X0, x1 = XE, c = G) => {
    let y = lvl ? hi(r) : lo(r), d = `M${x0} ${y}`;
    xs.filter(x => x > x0 && x < x1).forEach(x => { y = y === hi(r) ? lo(r) : hi(r); d += `H${x}V${y}`; });
    P(d + `H${x1}`, c);
  };
  const fill = (r, a, b) => F(a, hi(r) + 0.5, b - a, 15, '#00ff00');
  const stub = (r, up) => P(`M${X0} ${up ? hi(r) : lo(r)}v${up ? 8 : -7}`);
  const cycles = a => { const out = []; for (let i = 0; i < 10; i++) a.forEach(v => out.push(R(v + i * PERIOD))); return out.sort((p, q) => p - q); };
  const bus = (r, a = X0, b = XE, c = B) => P(`M${a} ${hi(r)}H${b}M${a} ${lo(r) - .3}H${b}`, c, 1);
  const cross = (r, x) => { const a = hi(r), b = lo(r), m = (a + b) / 2; F(x - 2.5, a - 1, 5, b - a + 2, '#000'); P([-1, 1].map(q => `M${x + 3 * q} ${a}h${-q}v4L${x + q} ${m}L${x + 2 * q} ${b - 4}V${b}h${q}`).join(''), '#b4ffb4', 1.5); };
  const text = (r, x, t) => o += `<text x="${x}" y="${hi(r) + 13}" fill="#eee">${t}</text>`;

  /* i2c_scl */
  stub(0, 1); P(`M${X0} ${hi(0)}h4M${L(272)} ${hi(0)}H${XE}`);
  fill(0, L(53), L(272)); fill(0, R(100), XE);
  for (let i = 0; i < 9; i++) { const x = R(383 + i * PERIOD); F(x - 1.500, hi(0) + .8, 3.500, 15, '#000'); }
  /* i2c_sda */
  stub(1, 1);
  bin(1, 1, [47,50,53,57,61,66,75,85,97,167,171,175,180,190,194,200,204,209,217,220,224,228,232,236,240,244,248,252,257,272].map(L), X0, R(90));
  bin(1, 1, cycles([97,104,107,111,114,121,124,132,149,214,221,230,238,242,252,262,266,269,272,275,280,288,292,298,315,366,369,373,377,382]), R(90));
  for (let i = 0; i < 10; i++) {
    const p = i * PERIOD, bar = (u, c, y) => { const x = R(u + p); if (x < XE) F(x - .7, y, 1.4, 8, c); };
    if (R(262 + p) < XE) { F(R(262 + p), hi(1), 4.5, 15, '#00ff00'); F(R(114 + p), hi(1), 2.5, 15, '#00ff00'); }
    if (R(368 + p) < XE) P(`M${R(322 + p)} ${lo(1) - 7}h2v7m2 0v-7h2v7m2 0v-7h2v7m2 0v-7h2v7`, '#107060', 1);
    bar(315, '#d00000', hi(1)); [157,211,264,322,334,347,358,368].forEach(u => bar(u, '#0000ff', lo(1) - 8));
  }
  [108,160,213,265].forEach(u => F(L(u) - .7, lo(1) - 8, 1.4, 8, '#0000ff'));
  [2, 3].forEach(r => fill(r, X0, XE));
  /* state buses */
  const stateBus = (r, left, right) => { bus(r); left.concat(right).filter(x => x < XE - 3).forEach(x => cross(r, x)); };
  stateBus(4, [36,52,105,157,212,268].map(L), cycles([100,153,205,262,318,370,379]));
  text(4, L(292), "4'd0");
  stateBus(16, [36,46,100,155,207,262].map(L), cycles([92,147,200,258,313,369,377]));
  text(16, L(283), "4'h0");
  /* i2c_sda_reg */
  stub(5, 1);
  bin(5, 1, [47,50,53,57,61,66,75,82,88,92,110,157,160,164,168,172,183,190,196,201,207,214,218,222,226,232,236,241,246,250,255,259,264,270].map(L), X0, R(90));
  bin(5, 1, cycles([97,104,107,111,114,121,124,132,145,149,157,203,208,213,220,226,230,237,240,245,249,262,273,277,283,288,292,298,375,378]), R(90));
  for (let i = 0; i < 10; i++) [[97,5],[114,8],[237,6],[378,6]].forEach(([u, w]) => { const x = R(u + i * PERIOD); if (x < XE - 3) F(x, hi(5), w / 3, 15, '#00f000'); });
  /* levels */
  P(`M${X0} ${lo(6)}V${hi(6)}H${XE}`); stub(7, 0); P(`M${X0} ${lo(7)}H${XE}`);
  [8, 9, 10].forEach(r => { bus(r); P(`M${X0 + 2} ${hi(r)}q-3 7 0 15.500`, B); });
  text(8, X(14), "7'h53"); text(9, X(14), "16'h005a"); text(10, X(12), "8'b10101010");
  [11, 12, 13].forEach(r => stub(r, 0));
  bin(11, 0, [X(10), X(161), R(91)]); bin(12, 0, [X(10), X(161)]); bin(13, 0, [R(91)]);
  P(`M${X0 + 1} ${hi(14)}V${lo(14)}`, G, 2);
  bin(14, 0, [X(160), X(165)].concat(cycles([376, 380])));
  F(X(3), hi(15) - .5, XE - X(3), 7.500, '#b4ffb4'); F(X(3), hi(15) + 8.500, XE - X(3), 7.500, '#b4ffb4'); P(`M${X(3)} ${hi(15) + 7.700}H${XE}`, '#507850', 1);
  /* cnt_bit: dense changes drawn as a weave */
  const weave = (a, b) => { for (let x = a; x < b - 2; x += 4) { F(x, hi(17) - .5, 2.2, 5, '#b4ffb4'); F(x, lo(17) - 4.5, 2.2, 5, '#b4ffb4'); F(x + 2, hi(17) + 4.500, 2, 3, '#b4ffb4'); F(x + 2, hi(17) + 8.500, 2, 3, '#b4ffb4'); F(x, hi(17) + 7, 3, 2, '#7cc07c'); } };
  bus(17);
  P(`M${X0 + 2} ${hi(17)}q-3 7 0 15.500`, B); weave(L(52), L(262)); text(17, L(280), "4'h0");
  for (let i = 0; i < 10; i++) { const p = i * PERIOD, e = u => Math.min(R(u + p), XE); weave(e(102), e(258)); weave(e(265), e(370)); [373, 389].forEach(u => { if (R(u + p) < XE) P(`M${R(u + p)} ${hi(17)}v15`, B); }); }
  /* cnt_bit_flag_work */
  stub(18, 0);
  bin(18, 0, [50,96,101,150,157,203,210,257].map(L), X0, R(80));
  bin(18, 0, cycles([97,147,150,199,203,251,264,311,315,364]), R(80));
  P(`M${X0} ${hi(19)}v8`, G); o += `<path d="M${X0} ${lo(19)}H${XE}" stroke="#eee" stroke-width="1.300" stroke-dasharray="4.500 3"/>`;
  for (let r = 20; r < 30; r++) { bus(r); text(r, X(14), SIG[r][1]); }
  const cur = (h, red) => {
    let c = `<path d="M${X(14)} 0V${h}" stroke="#e0a800" stroke-width="1.400"/><path d="M${X(1151.8)} 0V${h}" stroke="#8a6a00" stroke-width="4.500"/><path d="M${X(1151.8)} 0V${h}" stroke="#ffd000" stroke-width="3"/>`;
    if (red) [2, 3].forEach(r => c += `<path d="M${X(14)} ${hi(r)}v15" stroke="#e04000" stroke-width="1.300"/><path d="M${X(1151.8)} ${hi(r)}v15" stroke="#ff2800" stroke-width="3"/>`), c += `<path d="M${X(1151.8)} ${hi(15)}v15" stroke="#4a20b8" stroke-width="3"/>`;
    return c;
  };
  wavePlot.innerHTML = o + cur(H, 1);
  headPlot.innerHTML = cur(24);
  /* time axis */
  let a = '';
  for (let t = 50; t <= 3100; t += 50) a += t % 100 ? `<path d="M${X(t)} 4v5" stroke="#00c800" stroke-width="1.300"/>` : `<path d="M${X(t)} 0v9" stroke="#00c800" stroke-width="1.300"/>`;
  for (let t = 200; t <= 3000; t += 200) a += `<text x="${X(t)}" y="25" text-anchor="middle" fill="#00dc00">${t} us</text>`;
  a += `<text x="${X0}" y="25" fill="#00dc00">00 us</text><path d="M4 29.500H${W - 4}M4 50.500H${W - 4}" stroke="#777"/>`;
  const mid = X(662);
  a += cur(29) + `<path d="M${X(1151.8)} 28V50" stroke="#ffd000" stroke-width="3"/><path d="M${X(14)} 40.500H${X(1150)}" stroke="#ccc"/><rect x="${mid - 50}" y="32" width="100" height="17"/><text x="${mid}" y="46" text-anchor="middle" fill="#eee">1138.385575 us</text>`;
  const tag = (x, y, w, t) => `<rect x="${x}" y="${y}" width="${w}" height="19" fill="#000" stroke="#d8a800" stroke-width="1.500"/><text x="${x + w / 2}" y="${y + 15}" text-anchor="middle" fill="#f0c000">${t}</text>`;
  a += tag(X0, 30, 88, '13.425739 us') + tag(X(1151.8) - 52, 51, 103, '1151.811314 us');
  axisPlot.innerHTML = a;
}
draw();
addEventListener('resize', draw);
</script>
</body>
</html>
